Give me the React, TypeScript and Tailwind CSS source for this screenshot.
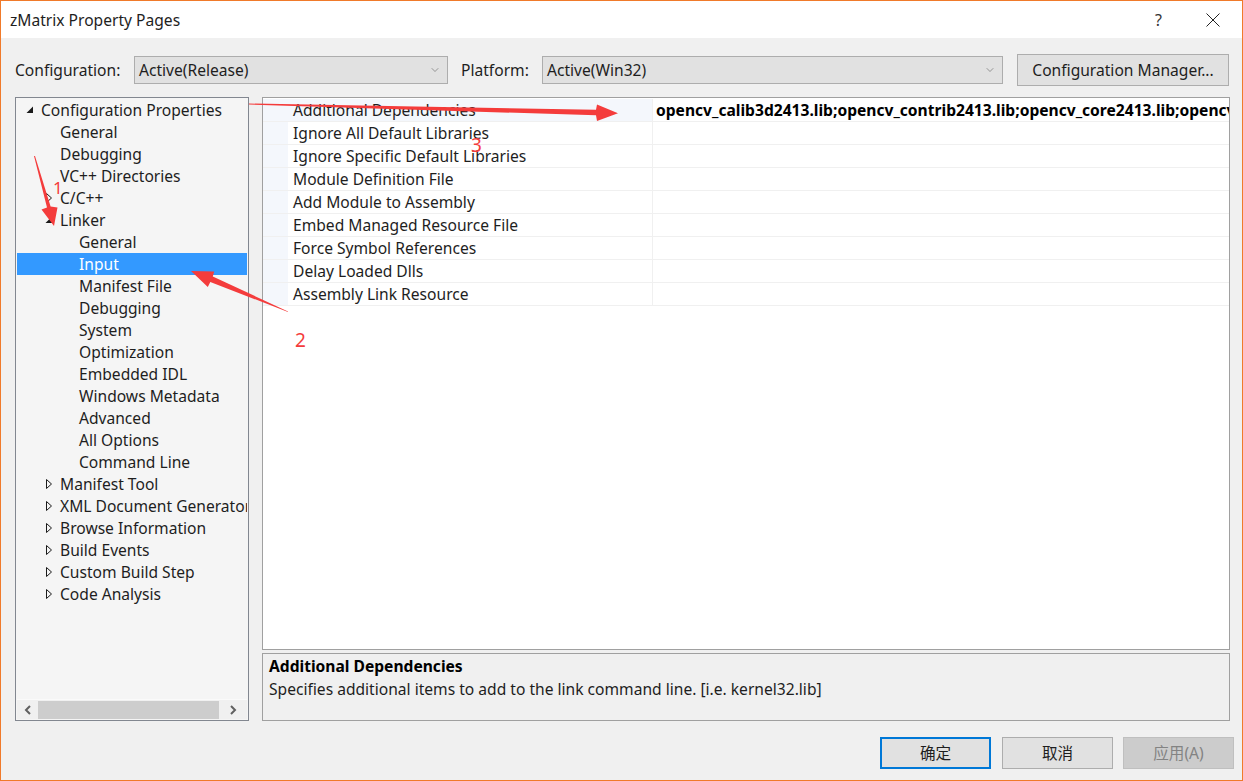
import { ChevronDown } from "lucide-react";

const FONT = "font-['Noto_Sans','Noto_Sans_CJK_SC',sans-serif]";

type TreeItem = {
  label: string;
  level: 0 | 1 | 2;
  kind: "open" | "closed" | "leaf";
  selected?: boolean;
};

const TREE: TreeItem[] = [
  { label: "Configuration Properties", level: 0, kind: "open" },
  { label: "General", level: 1, kind: "leaf" },
  { label: "Debugging", level: 1, kind: "leaf" },
  { label: "VC++ Directories", level: 1, kind: "leaf" },
  { label: "C/C++", level: 1, kind: "closed" },
  { label: "Linker", level: 1, kind: "open" },
  { label: "General", level: 2, kind: "leaf" },
  { label: "Input", level: 2, kind: "leaf", selected: true },
  { label: "Manifest File", level: 2, kind: "leaf" },
  { label: "Debugging", level: 2, kind: "leaf" },
  { label: "System", level: 2, kind: "leaf" },
  { label: "Optimization", level: 2, kind: "leaf" },
  { label: "Embedded IDL", level: 2, kind: "leaf" },
  { label: "Windows Metadata", level: 2, kind: "leaf" },
  { label: "Advanced", level: 2, kind: "leaf" },
  { label: "All Options", level: 2, kind: "leaf" },
  { label: "Command Line", level: 2, kind: "leaf" },
  { label: "Manifest Tool", level: 1, kind: "closed" },
  { label: "XML Document Generator", level: 1, kind: "closed" },
  { label: "Browse Information", level: 1, kind: "closed" },
  { label: "Build Events", level: 1, kind: "closed" },
  { label: "Custom Build Step", level: 1, kind: "closed" },
  { label: "Code Analysis", level: 1, kind: "closed" },
];

const PROPS = [
  "Additional Dependencies",
  "Ignore All Default Libraries",
  "Ignore Specific Default Libraries",
  "Module Definition File",
  "Add Module to Assembly",
  "Embed Managed Resource File",
  "Force Symbol References",
  "Delay Loaded Dlls",
  "Assembly Link Resource",
];

const DEPS =
  "opencv_calib3d2413.lib;opencv_contrib2413.lib;opencv_core2413.lib;opencv_features2d2413.lib;opencv_flann2413.lib";

function Expander({ kind }: { kind: TreeItem["kind"] }) {
  if (kind === "open") {
    return (
      <svg width="16" height="12" viewBox="0 0 16 12" className="shrink-0">
        <polygon points="8,2.5 8,9 1.5,9" fill="#1a1a1a" />
      </svg>
    );
  }
  if (kind === "closed") {
    return (
      <svg width="16" height="12" viewBox="0 0 16 12" className="shrink-0">
        <polygon
          points="2.5,1.5 7.5,6 2.5,10.5"
          fill="none"
          stroke="#1a1a1a"
          strokeWidth="1"
        />
      </svg>
    );
  }
  return <span className="w-[16px] shrink-0" />;
}

function TreeRow({ item }: { item: TreeItem }) {
  const pad =
    item.level === 0 ? "pl-[8px]" : item.level === 1 ? "pl-[27px]" : "pl-[46px]";
  return (
    <div
      className={`flex h-[22px] items-center overflow-hidden ${pad} ${
        item.selected ? "bg-[#3399ff] text-white" : "text-[#1e1e1e]"
      }`}
    >
      <Expander kind={item.kind} />
      <span className="shrink-0 whitespace-nowrap">{item.label}</span>
    </div>
  );
}

function Combo({ value, width }: { value: string; width: string }) {
  return (
    <div
      className={`flex h-[28px] ${width} items-center justify-between border border-[#adadad] bg-[#e1e1e1] pl-[4px] pr-[6px] text-[#1e1e1e]`}
    >
      <span>{value}</span>
      <ChevronDown size={12} strokeWidth={1.2} color="#5f5f5f" />
    </div>
  );
}

function Annotations() {
  return (
    <svg
      className="pointer-events-none absolute left-0 top-0"
      width="1243"
      height="781"
      viewBox="0 0 1243 781"
    >
      <g fill="#f43c3c">
        {/* arrow 1 */}
        <polygon points="33,155 34,155 49.6,205.6 56.5,206.5 53,225 40.5,208.5 46,206.4" />
        {/* arrow 2 */}
        <polygon points="287,311 287,310.5 211.8,275.5 213.2,270.6 190,270 206.8,286 209.3,281" />
        {/* arrow 3 */}
        <polygon points="248,102.5 595,108.8 596,103.5 617,112.2 596,120 595,114.3 248,103.6" />
      </g>
      <g fill="#f43c3c" fontFamily="Noto Sans, sans-serif">
        <text x="52" y="193" fontSize="17">1</text>
        <text x="294" y="346" fontSize="19">2</text>
        <text x="470" y="151" fontSize="19">3</text>
      </g>
    </svg>
  );
}

export default function App() {
  return (
    <div
      className={`relative box-border flex h-[781px] w-[1243px] flex-col overflow-hidden border border-[#f07a2a] bg-[#f0f0f0] text-[15.6px] leading-[22px] ${FONT}`}
    >
      {/* title bar */}
      <div className="flex h-[37px] shrink-0 items-center bg-white pl-[9px] text-[#1e1e1e]">
        <span className="flex-1">zMatrix Property Pages</span>
        <span className="mr-[44px] text-[16px] text-[#333]">?</span>
        <svg width="14" height="14" viewBox="0 0 14 14" className="mr-[22px]">
          <path d="M0.5 0.5 L13.5 13.5 M13.5 0.5 L0.5 13.5" stroke="#222" strokeWidth="1" />
        </svg>
      </div>

      {/* configuration bar */}
      <div className="mt-[16px] flex h-[32px] shrink-0 items-center pl-[14px] text-[#1e1e1e]">
        <span className="w-[119px]">Configuration:</span>
        <Combo value="Active(Release)" width="w-[314px]" />
        <span className="ml-[13px] w-[81px]">Platform:</span>
        <Combo value="Active(Win32)" width="w-[461px]" />
        <button className="ml-[14px] flex h-[32px] w-[212px] items-center justify-center border border-[#adadad] bg-[#e1e1e1] text-[#1e1e1e]">
          Configuration Manager...
        </button>
      </div>

      {/* main */}
      <div className="mt-[11px] flex h-[624px] shrink-0 pl-[14px]">
        {/* tree */}
        <div className="flex w-[234px] flex-col border border-[#828790] bg-[#f5f5f5]">
          <div className="flex-1 overflow-hidden px-[1px] pt-[1px]">
            {TREE.map((item, i) => (
              <TreeRow key={i} item={item} />
            ))}
          </div>
          <div className="mx-[1px] mb-[1px] flex h-[20px] items-center border-t border-[#fafafa] bg-[#f0f0f0]">
            <div className="flex w-[21px] justify-center">
              <svg width="8" height="10" viewBox="0 0 8 10">
                <polyline points="6,1 2,5 6,9" fill="none" stroke="#606060" strokeWidth="2" />
              </svg>
            </div>
            <div className="h-[18px] w-[181px] bg-[#cdcdcd]" />
            <div className="flex flex-1 justify-center">
              <svg width="8" height="10" viewBox="0 0 8 10">
                <polyline points="2,1 6,5 2,9" fill="none" stroke="#606060" strokeWidth="2" />
              </svg>
            </div>
          </div>
        </div>

        {/* right column */}
        <div className="ml-[13px] flex w-[968px] flex-col">
          <div className="h-[553px] overflow-hidden border border-[#a0a0a0] bg-white pt-[1px]">
            {PROPS.map((name, i) => (
              <div key={name} className="flex h-[23px] border-b border-[#f0f0f0]">
                <div className="w-[25px] bg-[#f4f7fc]" />
                <div
                  className={`flex w-[365px] items-center border-r border-[#f0f0f0] pl-[5px] text-[#1e1e1e] ${
                    i === 0 ? "bg-[#f4f7fc]" : ""
                  }`}
                >
                  {name}
                </div>
                <div className="flex flex-1 items-center overflow-hidden whitespace-nowrap pl-[3px] font-bold text-black">
                  {i === 0 ? DEPS : ""}
                </div>
              </div>
            ))}
          </div>
          <div className="mt-[3px] h-[68px] border border-[#a0a0a0] bg-[#f0f0f0] pl-[6px] pt-[1px] leading-[23px] text-[#1e1e1e]">
            <div className="font-bold text-black">Additional Dependencies</div>
            <div>Specifies additional items to add to the link command line. [i.e. kernel32.lib]</div>
          </div>
        </div>
      </div>

      {/* buttons */}
      <div className="mt-[16px] flex h-[32px] shrink-0 justify-end gap-[10px] pr-[8px]">
        <button className="flex w-[111px] items-center justify-center border-2 border-[#0078d7] bg-[#e1e1e1] text-[#1e1e1e]">
          确定
        </button>
        <button className="ml-[1px] flex w-[111px] items-center justify-center border border-[#adadad] bg-[#e1e1e1] text-[#1e1e1e]">
          取消
        </button>
        <button className="flex w-[111px] items-center justify-center border border-[#bfbfbf] bg-[#cccccc] text-[#838383]">
          应用(A)
        </button>
      </div>

      <Annotations />
    </div>
  );
}
